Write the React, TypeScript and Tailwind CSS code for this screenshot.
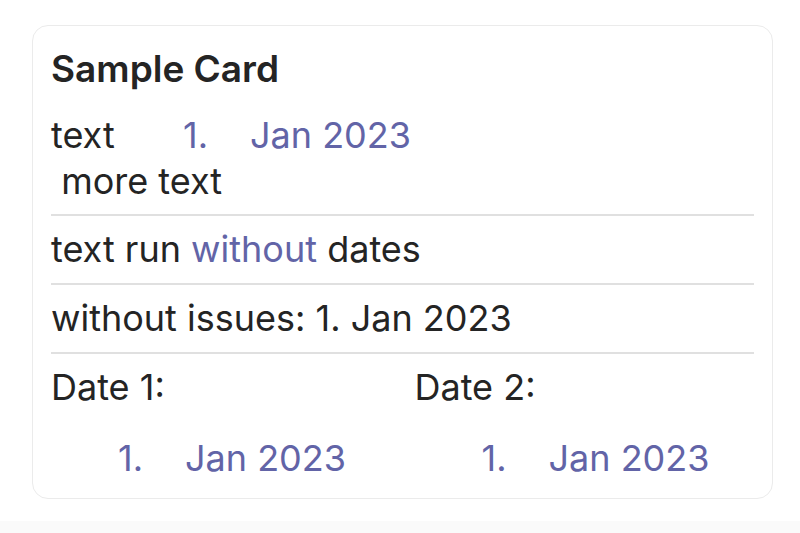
import React from "react";

function DateText() {
  return (
    <span className="inline-flex text-[#6264a7]">
      <span className="w-[67px]">1.</span>
      <span>Jan 2023</span>
    </span>
  );
}

function App() {
  return (
    <main
      className="w-[800px] h-[533px] bg-white flex flex-col text-[#242424]"
      style={{ fontFamily: "Inter, 'Noto Sans', sans-serif" }}
    >
      <div className="pt-[25px] pl-[32px] pr-[27px]">
        <div className="rounded-[16px] border border-[#ebebeb] bg-white px-[18px] pt-[20px] pb-[17px] text-[36px] leading-[46px]">
          {/* ---------- Title ---------- */}
          <h1 className="font-semibold text-[37px]">Sample Card</h1>

          {/* ---------- Mixed row ---------- */}
          <div className="pt-[20px] pb-[10px] border-b-2 border-[#e0e0e0]">
            <div className="flex">
              <span className="w-[132px]">text</span>
              <DateText />
            </div>
            <div>&nbsp;more text</div>
          </div>

          <div className="pt-[10px] pb-[11px] border-b-2 border-[#e0e0e0]">
            text run <span className="text-[#6264a7]">without</span> dates
          </div>

          <div className="pt-[10px] pb-[11px] border-b-2 border-[#e0e0e0]">
            without issues: 1. Jan 2023
          </div>

          {/* ---------- Date columns ---------- */}
          <div className="grid grid-cols-2 gap-x-6 pt-[10px]">
            <div>
              <div>Date 1:</div>
              <div className="pt-[25px] pl-[67px]">
                <DateText />
              </div>
            </div>
            <div>
              <div>Date 2:</div>
              <div className="pt-[25px] pl-[67px]">
                <DateText />
              </div>
            </div>
          </div>
        </div>
      </div>
      <div className="mt-auto h-[12px] bg-[#fafafa]" />
    </main>
  );
}

export default App;
